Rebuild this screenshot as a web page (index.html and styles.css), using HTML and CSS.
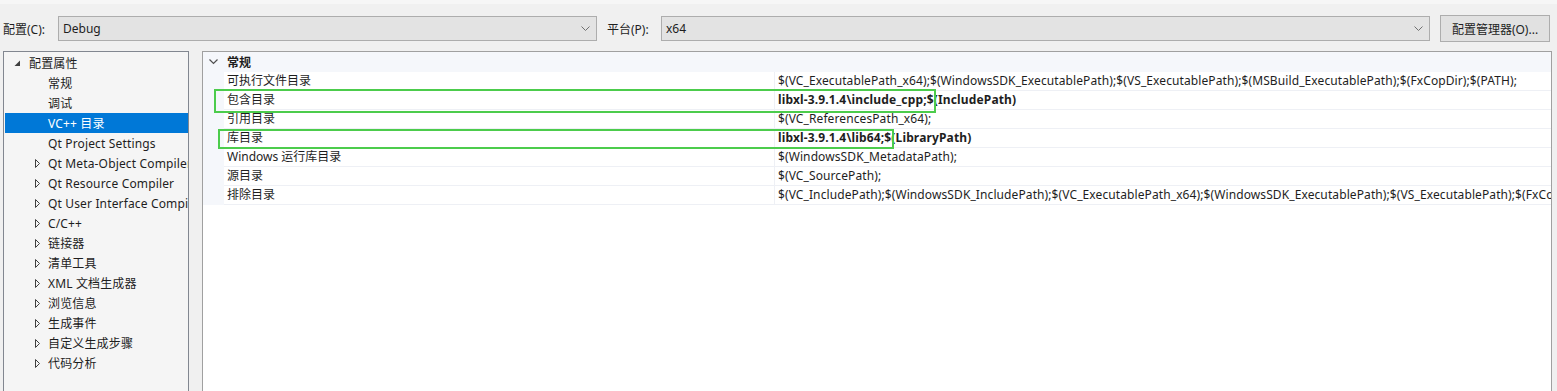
FILE: index.html
```html
<!DOCTYPE html>
<html lang="zh-CN">
<head>
<meta charset="utf-8">
<title>VC++ 目录</title>
<link rel="stylesheet" href="styles.css">
</head>
<body>
<div class="topstrip"></div>
<div class="toolbar">
  <span class="lbl lbl-config">配置(C):</span>
  <div class="combo combo-config"><span class="combo-text">Debug</span><svg class="chev" width="9" height="6" viewBox="0 0 9 6"><polyline points="0.5,0.5 4.5,4.5 8.5,0.5" fill="none" stroke="#707070" stroke-width="1"/></svg></div>
  <span class="lbl lbl-plat">平台(P):</span>
  <div class="combo combo-plat"><span class="combo-text">x64</span><svg class="chev" width="9" height="6" viewBox="0 0 9 6"><polyline points="0.5,0.5 4.5,4.5 8.5,0.5" fill="none" stroke="#707070" stroke-width="1"/></svg></div>
  <button class="btn">配置管理器(O)...</button>
</div>
<div class="main">
  <div class="tree">
    <div class="trow root"><svg class="tri-root" width="7" height="7" viewBox="0 0 7 7"><polygon points="6,0.5 6,6 0.5,6" fill="#404040"/></svg><span>配置属性</span></div>
    <div class="trow leaf"><span>常规</span></div>
    <div class="trow leaf"><span>调试</span></div>
    <div class="trow leaf sel"><span>VC++ 目录</span></div>
    <div class="trow leaf"><span>Qt Project Settings</span></div>
    <div class="trow node"><svg class="tri" width="5" height="9" viewBox="0 0 5 9"><polygon points="0.5,0.5 4.5,4.5 0.5,8.5" fill="none" stroke="#404040" stroke-width="1"/></svg><span>Qt Meta-Object Compiler</span></div>
    <div class="trow node"><svg class="tri" width="5" height="9" viewBox="0 0 5 9"><polygon points="0.5,0.5 4.5,4.5 0.5,8.5" fill="none" stroke="#404040" stroke-width="1"/></svg><span>Qt Resource Compiler</span></div>
    <div class="trow node"><svg class="tri" width="5" height="9" viewBox="0 0 5 9"><polygon points="0.5,0.5 4.5,4.5 0.5,8.5" fill="none" stroke="#404040" stroke-width="1"/></svg><span>Qt User Interface Compiler</span></div>
    <div class="trow node"><svg class="tri" width="5" height="9" viewBox="0 0 5 9"><polygon points="0.5,0.5 4.5,4.5 0.5,8.5" fill="none" stroke="#404040" stroke-width="1"/></svg><span>C/C++</span></div>
    <div class="trow node"><svg class="tri" width="5" height="9" viewBox="0 0 5 9"><polygon points="0.5,0.5 4.5,4.5 0.5,8.5" fill="none" stroke="#404040" stroke-width="1"/></svg><span>链接器</span></div>
    <div class="trow node"><svg class="tri" width="5" height="9" viewBox="0 0 5 9"><polygon points="0.5,0.5 4.5,4.5 0.5,8.5" fill="none" stroke="#404040" stroke-width="1"/></svg><span>清单工具</span></div>
    <div class="trow node"><svg class="tri" width="5" height="9" viewBox="0 0 5 9"><polygon points="0.5,0.5 4.5,4.5 0.5,8.5" fill="none" stroke="#404040" stroke-width="1"/></svg><span>XML 文档生成器</span></div>
    <div class="trow node"><svg class="tri" width="5" height="9" viewBox="0 0 5 9"><polygon points="0.5,0.5 4.5,4.5 0.5,8.5" fill="none" stroke="#404040" stroke-width="1"/></svg><span>浏览信息</span></div>
    <div class="trow node"><svg class="tri" width="5" height="9" viewBox="0 0 5 9"><polygon points="0.5,0.5 4.5,4.5 0.5,8.5" fill="none" stroke="#404040" stroke-width="1"/></svg><span>生成事件</span></div>
    <div class="trow node"><svg class="tri" width="5" height="9" viewBox="0 0 5 9"><polygon points="0.5,0.5 4.5,4.5 0.5,8.5" fill="none" stroke="#404040" stroke-width="1"/></svg><span>自定义生成步骤</span></div>
    <div class="trow node"><svg class="tri" width="5" height="9" viewBox="0 0 5 9"><polygon points="0.5,0.5 4.5,4.5 0.5,8.5" fill="none" stroke="#404040" stroke-width="1"/></svg><span>代码分析</span></div>
  </div>
  <div class="props">
    <div class="phead"><svg class="pchev" width="9" height="6" viewBox="0 0 9 6"><polyline points="0.5,0.5 4.5,4.5 8.5,0.5" fill="none" stroke="#505050" stroke-width="1.2"/></svg><span class="phead-text">常规</span></div>
    <div class="prow"><div class="pind"></div><div class="pname">可执行文件目录</div><div class="pval">$(VC_ExecutablePath_x64);$(WindowsSDK_ExecutablePath);$(VS_ExecutablePath);$(MSBuild_ExecutablePath);$(FxCopDir);$(PATH);</div></div>
    <div class="prow"><div class="pind"></div><div class="pname">包含目录</div><div class="pval bold">libxl-3.9.1.4\include_cpp;$(IncludePath)</div></div>
    <div class="prow"><div class="pind"></div><div class="pname">引用目录</div><div class="pval">$(VC_ReferencesPath_x64);</div></div>
    <div class="prow"><div class="pind"></div><div class="pname">库目录</div><div class="pval bold">libxl-3.9.1.4\lib64;$(LibraryPath)</div></div>
    <div class="prow"><div class="pind"></div><div class="pname">Windows 运行库目录</div><div class="pval">$(WindowsSDK_MetadataPath);</div></div>
    <div class="prow"><div class="pind"></div><div class="pname">源目录</div><div class="pval">$(VC_SourcePath);</div></div>
    <div class="prow"><div class="pind"></div><div class="pname">排除目录</div><div class="pval">$(VC_IncludePath);$(WindowsSDK_IncludePath);$(VC_ExecutablePath_x64);$(WindowsSDK_ExecutablePath);$(VS_ExecutablePath);$(FxCopDir);$(PATH);</div></div>
    <div class="mark mark-inc"></div>
    <div class="mark mark-lib"></div>
  </div>
</div>
</body>
</html>
```

FILE: styles.css
```css
html, body {
  margin: 0;
  padding: 0;
  height: 391px;
  overflow: hidden;
}
body {
  background: #f0f0f0;
  font-family: "Noto Sans", "Noto Sans CJK SC", sans-serif;
  font-size: 12px;
  color: #1e1e1e;
}
.topstrip {
  height: 4px;
  background: #f6f6f6;
}
.toolbar {
  display: flex;
  align-items: center;
  height: 27px;
  margin-top: 11px;
  padding-left: 3px;
}
.lbl {
  display: inline-block;
  white-space: nowrap;
}
.lbl-config { width: 55px; }
.lbl-plat { width: 54px; margin-left: 10px; }
.combo {
  box-sizing: border-box;
  height: 25px;
  background: #e3e3e3;
  border: 1px solid #adadad;
  display: flex;
  align-items: center;
  justify-content: space-between;
  padding: 0 6px 0 4px;
}
.combo-config { width: 539px; }
.combo-plat { width: 769px; }
.chev { margin-top: 1px; flex: none; }
.btn {
  box-sizing: border-box;
  margin-left: 10px;
  width: 110px;
  height: 27px;
  background: #e1e1e1;
  border: 1px solid #adadad;
  font-family: inherit;
  font-size: 12px;
  color: #1e1e1e;
  padding: 0;
}
.main {
  display: flex;
  margin-top: 9px;
  padding-left: 3px;
}
.tree {
  box-sizing: border-box;
  width: 186px;
  height: 400px;
  flex: none;
  background: #f5f5f5;
  border: 1px solid #828790;
  padding: 1px 0 0 1px;
  overflow: hidden;
}
.trow {
  height: 20px;
  display: flex;
  align-items: center;
  white-space: nowrap;
  overflow: hidden;
  color: #1e1e1e;
  letter-spacing: 0.15px;
}
.trow span { flex: none; }
.trow svg { flex: none; }
.trow.root { padding-left: 9px; }
.tri-root { margin-right: 8px; }
.trow.leaf { padding-left: 43px; }
.trow.node { padding-left: 30px; }
.tri { margin-right: 8px; }
.trow.sel {
  background: #0078d7;
  color: #ffffff;
}
.props {
  position: relative;
  box-sizing: border-box;
  margin-left: 13px;
  width: 1350px;
  height: 400px;
  flex: none;
  background: #ffffff;
  border-top: 1px solid #a0a0a0;
  border-left: 1px solid #a0a0a0;
  border-right: 1px solid #a0a0a0;
}
.phead {
  height: 20px;
  background: #f5f7fb;
  display: flex;
  align-items: center;
  padding-left: 6px;
}
.pchev { margin-right: 9px; flex: none; }
.phead-text { font-weight: bold; }
.prow {
  display: flex;
  height: 19px;
  box-sizing: border-box;
}
.pind {
  width: 21px;
  flex: none;
  background: #f5f7fb;
}
.pname {
  box-sizing: border-box;
  width: 550px;
  flex: none;
  padding-left: 3px;
  line-height: 18px;
  border-bottom: 1px solid #eef0f5;
  white-space: nowrap;
}
.pval {
  flex: 1;
  min-width: 0;
  box-sizing: border-box;
  padding-left: 3px;
  line-height: 18px;
  border-left: 1px solid #eef0f5;
  border-bottom: 1px solid #eef0f5;
  white-space: nowrap;
  overflow: hidden;
  letter-spacing: 0.1px;
}
.pval.bold { font-weight: bold; letter-spacing: 0.15px; }
.mark {
  position: absolute;
  box-sizing: border-box;
  border: 2px solid #4ccc4c;
}
.mark-inc {
  left: 11px;
  top: 37px;
  width: 722px;
  height: 24px;
}
.mark-lib {
  left: 15px;
  top: 77px;
  width: 676px;
  height: 20px;
}
```
